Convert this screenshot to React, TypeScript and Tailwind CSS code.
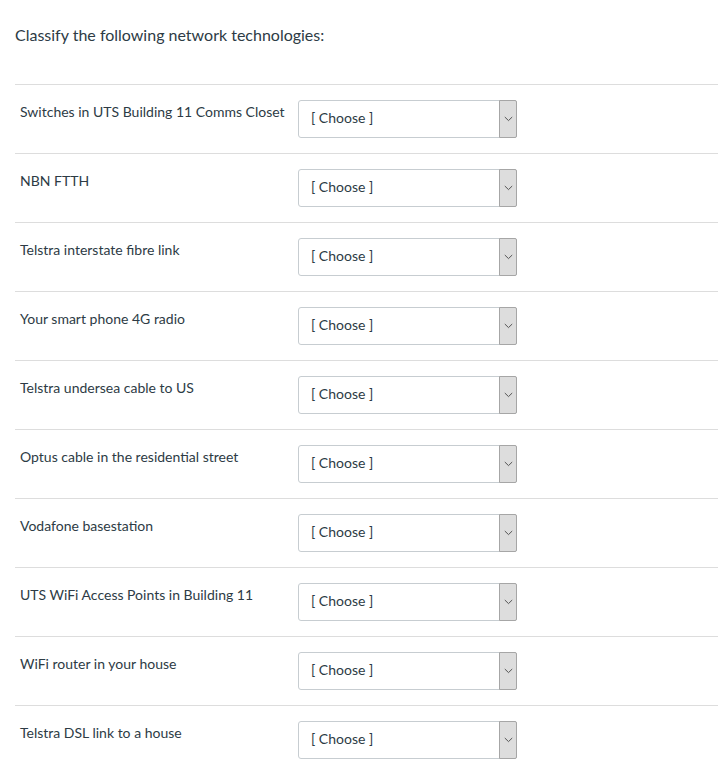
import React from 'react';

const items = [
  'Switches in UTS Building 11 Comms Closet',
  'NBN FTTH',
  'Telstra interstate fibre link',
  'Your smart phone 4G radio',
  'Telstra undersea cable to US',
  'Optus cable in the residential street',
  'Vodafone basestation',
  'UTS WiFi Access Points in Building 11',
  'WiFi router in your house',
  'Telstra DSL link to a house',
];

function ChooseSelect() {
  return (
    <div className="flex h-[38px] w-[219px] rounded-[3px] border border-[#c7cdd1] bg-white">
      <div className="flex flex-1 items-center pb-[3px] pl-[12px] text-[14px] text-[#2d3b45]">[ Choose ]</div>
      <div className="flex w-[18px] items-center justify-center rounded-r-[2px] border border-[#a6a6a6] bg-[#dddddd] -my-px -mr-px">
        <svg width="9" height="6" viewBox="0 0 9 6">
          <path d="M0.8 1 L4.5 4.6 L8.2 1" fill="none" stroke="#555" strokeWidth="1" />
        </svg>
      </div>
    </div>
  );
}

export default function App() {
  return (
    <div className="min-h-[781px] bg-white font-['Lato','Liberation_Sans',sans-serif] text-[#2d3b45]">
      <div className="ml-[15px] w-[703px]">
        <div className="pt-[23px] pb-[37px] text-[16px] leading-[24px]">Classify the following network technologies:</div>
        {items.map(label => (
          <div key={label} className="flex items-start border-t border-[#dddddd] py-[15px]">
            <div className="w-[283px] pl-[5px] pt-[2px] text-[14px] leading-[20px]">{label}</div>
            <ChooseSelect />
          </div>
        ))}
      </div>
    </div>
  );
}
